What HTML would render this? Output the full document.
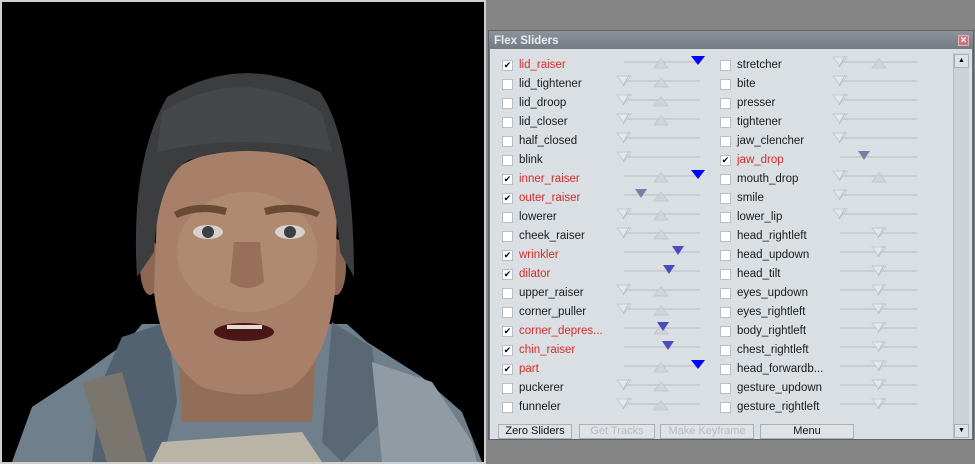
<!DOCTYPE html>
<html><head><meta charset="utf-8"><style>
*{margin:0;padding:0;box-sizing:border-box}
body{width:975px;height:464px;background:#858585;position:relative;overflow:hidden;font-family:"Liberation Sans",sans-serif;font-size:11.5px}
#vp{position:absolute;left:0;top:0;width:486px;height:464px;background:#cfcfcf}
#vp svg{position:absolute;left:2px;top:2px}
#panel{position:absolute;left:488px;top:30px;width:486px;height:410px;background:#6f767e;border:1px solid #5b6168}
#title{position:absolute;left:0;top:0;width:484px;height:18px;background:linear-gradient(#8b939c,#737a82);color:#e8ecef;font-weight:bold;font-size:11.5px;padding:4px 0 0 5px}
#close{position:absolute;left:469px;top:4px;width:11px;height:11px;background:#c97a80;border:1px solid #e6b0b4;color:#fff;font-size:10px;line-height:9px;text-align:center;font-weight:bold}
#content{position:absolute;left:1px;top:18px;width:482px;height:390px;background:#dadfe3}
#sb{position:absolute;left:463px;top:4px;width:16px;height:385px;background:#cdd2d6;border-left:1px solid #b6bcc1}
.sbb{position:absolute;left:0;width:15px;height:14px;background:#dde2e6;border:1px solid #aab0b5;font-size:7px;text-align:center;line-height:12px;color:#000}
.row{position:absolute;height:14px;line-height:14px;color:#1a1a1a;white-space:nowrap}
.row i{position:absolute;left:0;top:2px;width:11px;height:11px;background:#fff;border:1px solid #b8bec3;font-style:normal;font-size:9px;line-height:9px;text-align:center;color:#000}
.row span{position:absolute;left:17px;top:0}
.r span{color:#d52b2b}
.btn{position:absolute;top:375px;height:15px;background:#dfe3e6;border:1px solid #a9afb4;font-size:11px;text-align:center;line-height:13px;color:#111}
.dis{color:#b7bcc0}
#ov{position:absolute;left:0;top:0}
</style></head><body>
<div id="vp">
<svg width="482" height="460" viewBox="0 0 482 460">
<rect width="482" height="460" fill="#000"/>
<path d="M10 460 L30 405 L80 372 L125 340 L140 322 L345 322 L365 340 L420 375 L460 410 L480 460 Z" fill="#6f7f8c"/>
<path d="M120 335 L165 320 L175 400 L160 460 L90 460 L100 380 Z" fill="#536270"/>
<path d="M80 380 L120 370 L145 460 L105 460 Z" fill="#7a766e"/>
<path d="M330 320 L370 345 L380 420 L340 460 L320 440 Z" fill="#5a6875"/>
<path d="M370 360 L430 380 L470 440 L475 460 L380 460 Z" fill="#909ba4"/>
<path d="M160 440 L300 430 L320 460 L150 460 Z" fill="#bab4a6"/>
<path d="M175 330 L315 330 L310 420 L180 420 Z" fill="#916d5a"/>
<ellipse cx="148" cy="265" rx="10" ry="28" fill="#8e6754"/>
<ellipse cx="334" cy="265" rx="10" ry="28" fill="#8e6754"/>
<path d="M155 210 Q155 150 245 148 Q335 150 335 210 L333 290 Q325 360 290 385 Q245 400 200 385 Q160 360 152 290 Z" fill="#a88069"/>
<ellipse cx="245" cy="250" rx="70" ry="60" fill="#b58f77" opacity="0.6"/>
<path d="M135 275 Q128 160 165 95 Q240 50 318 90 Q352 140 352 275 L338 250 Q333 175 305 158 Q245 140 187 158 Q156 175 152 250 Z" fill="#3b3d3f"/>
<path d="M160 110 Q240 60 320 110 L330 150 Q245 130 155 150 Z" fill="#4a4d50" opacity="0.7"/>
<path d="M172 210 Q195 198 225 206 L223 213 Q198 206 175 216 Z" fill="#6a4a34"/>
<path d="M262 206 Q292 198 318 210 L315 215 Q292 206 264 213 Z" fill="#6a4a34"/>
<ellipse cx="206" cy="230" rx="15" ry="7" fill="#d8d0cc"/>
<circle cx="206" cy="230" r="6" fill="#3c3f44"/>
<ellipse cx="288" cy="230" rx="15" ry="7" fill="#d8d0cc"/>
<circle cx="288" cy="230" r="6" fill="#3c3f44"/>
<path d="M232 240 L228 280 Q245 292 262 280 L258 240 Z" fill="#976f5b"/>
<ellipse cx="242" cy="330" rx="30" ry="9" fill="#4a1616"/>
<rect x="225" y="323" width="35" height="4" fill="#e4dcd4"/>
</svg>
</div>

<div id="panel">
<div id="title">Flex Sliders</div>
<div id="close">×</div>
<div id="content">
<div id="sb"><div class="sbb" style="top:1px">▲</div><div class="sbb" style="top:371px">▼</div></div>
<div class="btn" style="left:8px;width:74px">Zero Sliders</div>
<div class="btn dis" style="left:89px;width:76px">Get Tracks</div>
<div class="btn dis" style="left:170px;width:94px">Make Keyframe</div>
<div class="btn" style="left:270px;width:94px">Menu</div>
</div>
</div>

<svg id="ov" width="975" height="464">
<defs>
<g id="z"><polygon points="-7,-5 7,-5 0,4" fill="#e4e8eb" stroke="#c5cacf" stroke-width="1"/><line x1="-1" y1="5" x2="5" y2="-6" stroke="#b9bec3"/></g>
<g id="u"><polygon points="-7,5 7,5 0,-4" fill="#d0d5d9" stroke="#c3c8cc"/></g>
<polygon id="b" points="-7,-6 7,-6 0,3" fill="#0000ff"/>
<polygon id="m" points="-6,-6 6,-6 0,3" fill="#4b4bc0"/>
<polygon id="g" points="-6,-6 6,-6 0,3" fill="#7b7fa6"/>
</defs>
<g stroke="#c4c9cd" stroke-width="1.5">
<line x1="624" y1="62" x2="700" y2="62"/><line x1="624" y1="81" x2="700" y2="81"/><line x1="624" y1="100" x2="700" y2="100"/><line x1="624" y1="119" x2="700" y2="119"/><line x1="624" y1="138" x2="700" y2="138"/><line x1="624" y1="157" x2="700" y2="157"/><line x1="624" y1="176" x2="700" y2="176"/><line x1="624" y1="195" x2="700" y2="195"/><line x1="624" y1="214" x2="700" y2="214"/><line x1="624" y1="233" x2="700" y2="233"/><line x1="624" y1="252" x2="700" y2="252"/><line x1="624" y1="271" x2="700" y2="271"/><line x1="624" y1="290" x2="700" y2="290"/><line x1="624" y1="309" x2="700" y2="309"/><line x1="624" y1="328" x2="700" y2="328"/><line x1="624" y1="347" x2="700" y2="347"/><line x1="624" y1="366" x2="700" y2="366"/><line x1="624" y1="385" x2="700" y2="385"/><line x1="624" y1="404" x2="700" y2="404"/>
<line x1="840" y1="62" x2="917" y2="62"/><line x1="840" y1="81" x2="917" y2="81"/><line x1="840" y1="100" x2="917" y2="100"/><line x1="840" y1="119" x2="917" y2="119"/><line x1="840" y1="138" x2="917" y2="138"/><line x1="840" y1="157" x2="917" y2="157"/><line x1="840" y1="176" x2="917" y2="176"/><line x1="840" y1="195" x2="917" y2="195"/><line x1="840" y1="214" x2="917" y2="214"/><line x1="840" y1="233" x2="917" y2="233"/><line x1="840" y1="252" x2="917" y2="252"/><line x1="840" y1="271" x2="917" y2="271"/><line x1="840" y1="290" x2="917" y2="290"/><line x1="840" y1="309" x2="917" y2="309"/><line x1="840" y1="328" x2="917" y2="328"/><line x1="840" y1="347" x2="917" y2="347"/><line x1="840" y1="366" x2="917" y2="366"/><line x1="840" y1="385" x2="917" y2="385"/><line x1="840" y1="404" x2="917" y2="404"/>
</g>
<use href="#u" x="661" y="63"/><use href="#u" x="661" y="82"/><use href="#u" x="661" y="101"/><use href="#u" x="661" y="120"/><use href="#u" x="661" y="177"/><use href="#u" x="661" y="196"/><use href="#u" x="661" y="215"/><use href="#u" x="661" y="234"/><use href="#u" x="661" y="291"/><use href="#u" x="661" y="310"/><use href="#u" x="661" y="329"/><use href="#u" x="661" y="367"/><use href="#u" x="661" y="386"/><use href="#u" x="661" y="405"/>
<use href="#z" x="624" y="81"/><use href="#z" x="624" y="100"/><use href="#z" x="624" y="119"/><use href="#z" x="624" y="138"/><use href="#z" x="624" y="157"/><use href="#z" x="624" y="214"/><use href="#z" x="624" y="233"/><use href="#z" x="624" y="290"/><use href="#z" x="624" y="309"/><use href="#z" x="624" y="385"/><use href="#z" x="624" y="404"/>
<use href="#b" x="698" y="62"/><use href="#b" x="698" y="176"/><use href="#g" x="641" y="195"/><use href="#m" x="678" y="252"/><use href="#m" x="669" y="271"/><use href="#m" x="663" y="328"/><use href="#m" x="668" y="347"/><use href="#b" x="698" y="366"/>
<use href="#u" x="879" y="63"/><use href="#u" x="879" y="177"/>
<use href="#z" x="840" y="62"/><use href="#z" x="840" y="81"/><use href="#z" x="840" y="100"/><use href="#z" x="840" y="119"/><use href="#z" x="840" y="138"/><use href="#z" x="840" y="176"/><use href="#z" x="840" y="195"/><use href="#z" x="840" y="214"/>
<use href="#g" x="864" y="157"/>
<use href="#z" x="879" y="233"/><use href="#z" x="879" y="252"/><use href="#z" x="879" y="271"/><use href="#z" x="879" y="290"/><use href="#z" x="879" y="309"/><use href="#z" x="879" y="328"/><use href="#z" x="879" y="347"/><use href="#z" x="879" y="366"/><use href="#z" x="879" y="385"/><use href="#z" x="879" y="404"/>
</svg>

<div class="row r" style="left:502px;top:58px"><i>✔</i><span>lid_raiser</span></div>
<div class="row" style="left:502px;top:77px"><i></i><span>lid_tightener</span></div>
<div class="row" style="left:502px;top:96px"><i></i><span>lid_droop</span></div>
<div class="row" style="left:502px;top:115px"><i></i><span>lid_closer</span></div>
<div class="row" style="left:502px;top:134px"><i></i><span>half_closed</span></div>
<div class="row" style="left:502px;top:153px"><i></i><span>blink</span></div>
<div class="row r" style="left:502px;top:172px"><i>✔</i><span>inner_raiser</span></div>
<div class="row r" style="left:502px;top:191px"><i>✔</i><span>outer_raiser</span></div>
<div class="row" style="left:502px;top:210px"><i></i><span>lowerer</span></div>
<div class="row" style="left:502px;top:229px"><i></i><span>cheek_raiser</span></div>
<div class="row r" style="left:502px;top:248px"><i>✔</i><span>wrinkler</span></div>
<div class="row r" style="left:502px;top:267px"><i>✔</i><span>dilator</span></div>
<div class="row" style="left:502px;top:286px"><i></i><span>upper_raiser</span></div>
<div class="row" style="left:502px;top:305px"><i></i><span>corner_puller</span></div>
<div class="row r" style="left:502px;top:324px"><i>✔</i><span>corner_depres...</span></div>
<div class="row r" style="left:502px;top:343px"><i>✔</i><span>chin_raiser</span></div>
<div class="row r" style="left:502px;top:362px"><i>✔</i><span>part</span></div>
<div class="row" style="left:502px;top:381px"><i></i><span>puckerer</span></div>
<div class="row" style="left:502px;top:400px"><i></i><span>funneler</span></div>

<div class="row" style="left:720px;top:58px"><i></i><span>stretcher</span></div>
<div class="row" style="left:720px;top:77px"><i></i><span>bite</span></div>
<div class="row" style="left:720px;top:96px"><i></i><span>presser</span></div>
<div class="row" style="left:720px;top:115px"><i></i><span>tightener</span></div>
<div class="row" style="left:720px;top:134px"><i></i><span>jaw_clencher</span></div>
<div class="row r" style="left:720px;top:153px"><i>✔</i><span>jaw_drop</span></div>
<div class="row" style="left:720px;top:172px"><i></i><span>mouth_drop</span></div>
<div class="row" style="left:720px;top:191px"><i></i><span>smile</span></div>
<div class="row" style="left:720px;top:210px"><i></i><span>lower_lip</span></div>
<div class="row" style="left:720px;top:229px"><i></i><span>head_rightleft</span></div>
<div class="row" style="left:720px;top:248px"><i></i><span>head_updown</span></div>
<div class="row" style="left:720px;top:267px"><i></i><span>head_tilt</span></div>
<div class="row" style="left:720px;top:286px"><i></i><span>eyes_updown</span></div>
<div class="row" style="left:720px;top:305px"><i></i><span>eyes_rightleft</span></div>
<div class="row" style="left:720px;top:324px"><i></i><span>body_rightleft</span></div>
<div class="row" style="left:720px;top:343px"><i></i><span>chest_rightleft</span></div>
<div class="row" style="left:720px;top:362px"><i></i><span>head_forwardb...</span></div>
<div class="row" style="left:720px;top:381px"><i></i><span>gesture_updown</span></div>
<div class="row" style="left:720px;top:400px"><i></i><span>gesture_rightleft</span></div>
</body></html>
